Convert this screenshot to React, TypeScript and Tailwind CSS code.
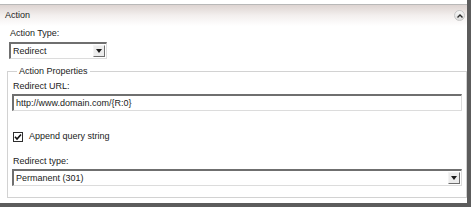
import React from "react";

const font = { fontFamily: '"Liberation Sans", Arial, sans-serif' };

const DropArrow = () => (
  <div className="w-[12px] h-[12px] bg-[#ececec] border-r border-b border-[#6e6e6e] border-t border-l border-t-[#f4f4f4] border-l-[#f4f4f4] flex items-center justify-center">
    <svg width="6" height="4" viewBox="0 0 6 4">
      <path d="M0 0 L6 0 L3 4 Z" fill="#1a1a1a" />
    </svg>
  </div>
);

const SelectBox = ({ value, width }: { value: string; width: string }) => (
  <div
    className={`${width} h-[17px] flex items-center justify-between bg-white border-t-2 border-l-2 border-[#6f6f6f] border-b border-r border-b-[#dcdcdc] border-r-[#dcdcdc] pl-[2px] pr-[1px]`}
  >
    <span className="leading-none">{value}</span>
    <DropArrow />
  </div>
);

export default function App() {
  return (
    <div className="w-[474px] h-[209px] bg-white text-[9px] text-[#222]" style={font}>
      <div className="w-[471px] h-[207px] border-r-4 border-b-4 border-[#5c5c5c] pt-[4px] flex flex-col">
        {/* header */}
        <div className="h-[22px] border-t border-[#b8b8b8] bg-gradient-to-b from-[#ddd4d1] via-[#f3efee] to-white flex items-center justify-between pl-[5px] pr-[2px]">
          <span className="leading-none">Action</span>
          <div className="w-[11px] h-[11px] rounded-full border border-[#c6c6c6] bg-gradient-to-b from-[#f7f7f7] to-[#dedede] flex items-center justify-center">
            <svg width="6" height="4" viewBox="0 0 6 4">
              <path d="M0.5 3.5 L3 1 L5.5 3.5" stroke="#2a2a2a" strokeWidth="1.4" fill="none" />
            </svg>
          </div>
        </div>

        <div className="pl-[9px] mt-[2px]">
          <div className="h-[11px] leading-[11px] pl-[1px]">Action Type:</div>
          <div className="mt-[3px]">
            <SelectBox value="Redirect" width="w-[98px]" />
          </div>
        </div>

        <fieldset className="ml-[7px] w-[460px] mt-[7px] border border-[#d2d2d2] px-[4px] pb-[11px]">
          <legend className="ml-[5px] px-[2px] leading-[11px]">Action Properties</legend>
          <div className="mt-[4px] h-[11px] leading-[11px] pl-[1px]">Redirect URL:</div>
          <div className="mt-[2px] h-[17px] bg-white border-t-2 border-l-2 border-[#6f6f6f] border-b border-r border-b-[#dcdcdc] border-r-[#dcdcdc] flex items-center pl-[2px]">
            <span className="leading-none">http://www.domain.com/{"{R:0}"}</span>
          </div>
          <div className="mt-[20px] flex items-center h-[11px]">
            <div className="ml-[1px] w-[10px] h-[10px] border border-[#2e2e2e] bg-white flex items-center justify-center">
              <svg width="8" height="8" viewBox="0 0 8 8">
                <path d="M1 3.8 L3 6 L7 1.5" stroke="#111" strokeWidth="1.6" fill="none" />
              </svg>
            </div>
            <span className="ml-[6px] leading-none">Append query string</span>
          </div>
          <div className="mt-[14px] h-[11px] leading-[11px] pl-[1px]">Redirect type:</div>
          <div className="mt-[2px]">
            <SelectBox value="Permanent (301)" width="w-full" />
          </div>
        </fieldset>
      </div>
    </div>
  );
}
